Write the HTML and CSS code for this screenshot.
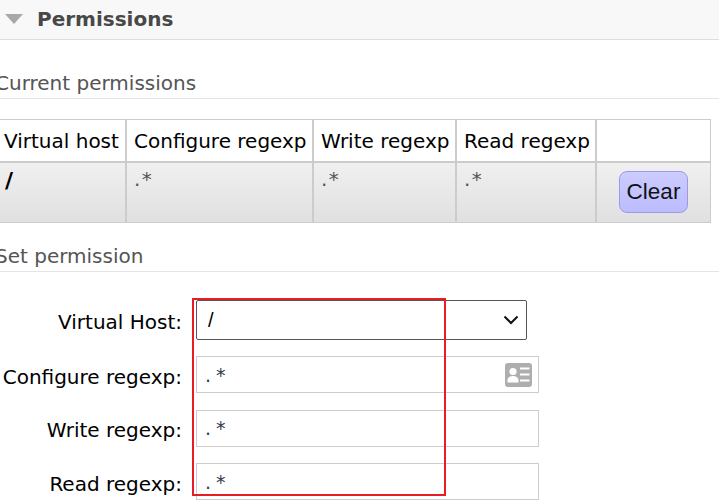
FILE: index.html
```html
<!DOCTYPE html>
<html lang="en">
<head>
  <meta charset="UTF-8" />
  <meta name="viewport" content="width=device-width, initial-scale=1.0" />
  <title>Permissions</title>
  <link rel="stylesheet" href="styles.css">
</head>
<body>
  <h2 class="section-title"><span class="arrow"></span>Permissions</h2>

  <h3 class="sub-title first">Current permissions</h3>
  <table class="list">
    <thead>
      <tr>
        <th class="col-vhost">Virtual host</th>
        <th class="col-configure">Configure regexp</th>
        <th class="col-write">Write regexp</th>
        <th class="col-read">Read regexp</th>
        <th class="col-action"></th>
      </tr>
    </thead>
    <tbody>
      <tr>
        <td class="vhost">/</td>
        <td>.*</td>
        <td>.*</td>
        <td>.*</td>
        <td class="action"><button class="clear-btn" type="button">Clear</button></td>
      </tr>
    </tbody>
  </table>

  <h3 class="sub-title second">Set permission</h3>
  <form class="perm-form">
    <div class="form-row row-select">
      <label>Virtual Host:</label>
      <div class="select-box">
        <span>/</span>
        <svg class="chevron" width="16" height="10" viewBox="0 0 16 10"><path d="M1.500 1.500 8 8l6.500-6.500" fill="none" stroke="#111" stroke-width="2"/></svg>
      </div>
    </div>
    <div class="form-row">
      <label>Configure regexp:</label>
      <div class="text-box">
        <span class="regex">.*</span>
        <svg class="card-icon" width="27" height="24" viewBox="0 0 27 24">
          <rect width="27" height="24" rx="3" fill="#aeaeae"/>
          <circle cx="8" cy="8.500" r="3.600" fill="#fff"/>
          <path d="M2.500 19.500v-2c0-3 2.500-4.500 5.500-4.500s5.500 1.500 5.500 4.500v2z" fill="#fff"/>
          <path d="M15 4.500h9.500v2H15zM15 10.500h9.500v2H15zM15 16.500h9.500v2H15z" fill="#fff"/>
        </svg>
      </div>
    </div>
    <div class="form-row">
      <label>Write regexp:</label>
      <div class="text-box"><span class="regex">.*</span></div>
    </div>
    <div class="form-row">
      <label>Read regexp:</label>
      <div class="text-box"><span class="regex">.*</span></div>
    </div>
  </form>

  <div class="highlight"></div>
</body>
</html>
```

FILE: styles.css
```css
html, body {
  margin: 0;
  height: 501px;
  overflow: hidden;
}
body {
  position: relative;
  background: #fff;
  font-family: "DejaVu Sans", Verdana, sans-serif;
  color: #000;
}

.section-title {
  display: flex;
  align-items: center;
  height: 37px;
  margin: 0;
  padding: 0 0 2px 5px;
  background: #f8f8f8;
  border-bottom: 1px solid #ddd;
  font-size: 20px;
  font-weight: bold;
  color: #484848;
}
.arrow {
  width: 0;
  height: 0;
  margin-right: 14px;
  border-left: 9.5px solid transparent;
  border-right: 9.5px solid transparent;
  border-top: 10px solid #a8a8a8;
}

.sub-title {
  margin: 0 0 0 -5px;
  padding-bottom: 2px;
  border-bottom: 1px solid #e4e4e4;
  font-size: 20px;
  font-weight: normal;
  line-height: 25px;
  color: #555;
}
.sub-title.first { margin-top: 31px; }
.sub-title.second { margin-top: 21px; }

.list {
  margin: 20px 0 0 -3px;
  border-collapse: separate;
  border-spacing: 0;
  table-layout: fixed;
  width: 714px;
}
.list th, .list td {
  border: 1px solid #ccc;
  font-size: 20px;
  text-align: left;
  vertical-align: top;
}
.list th {
  height: 43px;
  padding: 1px 0 0 7px;
  font-weight: normal;
  line-height: 40px;
  white-space: nowrap;
  box-sizing: border-box;
}
.list th.col-vhost {
  padding-left: 6px;
}
.list td {
  height: 61px;
  padding: 4px 0 0 7px;
  background: linear-gradient(#f0f0f0, #e0e0e0);
  color: #555;
  box-sizing: border-box;
  line-height: 24px;
  letter-spacing: 1.5px;
}
.col-vhost { width: 129px; }
.col-configure { width: 187px; }
.col-write { width: 143px; }
.col-read { width: 140px; }
.list td.vhost {
  padding: 6px 0 0 7px;
  font-size: 22px;
  font-weight: bold;
  color: #000;
}
.list td.action {
  padding: 8px 0 0 22px;
}
.clear-btn {
  display: block;
  width: 69px;
  height: 42px;
  padding: 0;
  border: 1px solid #9a9ae6;
  border-radius: 8px;
  background: linear-gradient(#ccccff, #bcbcff);
  font-family: "Liberation Sans", Arial, sans-serif;
  font-size: 22.5px;
  color: #111;
}

.perm-form {
  display: flex;
  flex-direction: column;
  margin-top: 28px;
}
.form-row {
  display: flex;
  align-items: center;
  gap: 14px;
  margin-bottom: 16.5px;
}
.row-select {
  margin-bottom: 16px;
}
.form-row label {
  width: 182px;
  padding-top: 4px;
  font-size: 20px;
  text-align: right;
  white-space: nowrap;
}
.select-box {
  display: flex;
  align-items: center;
  justify-content: space-between;
  box-sizing: border-box;
  width: 331px;
  height: 40px;
  padding: 0 7px 0 11px;
  border: 1px solid #555;
  border-radius: 2px;
  font-family: "Liberation Sans", Arial, sans-serif;
  font-size: 20px;
}
.text-box {
  display: flex;
  align-items: center;
  justify-content: space-between;
  box-sizing: border-box;
  width: 343px;
  height: 37px;
  padding: 0 6px 0 8px;
  border: 1px solid #ccc;
}
.regex {
  font-size: 19px;
  letter-spacing: 5px;
  color: #2f3b4c;
}
.card-icon {
  display: block;
}

/* red box drawn on top of the screenshot */
.highlight {
  position: absolute;
  left: 192px;
  top: 298px;
  width: 250px;
  height: 194px;
  border: 2px solid #e81c24;
}
```
